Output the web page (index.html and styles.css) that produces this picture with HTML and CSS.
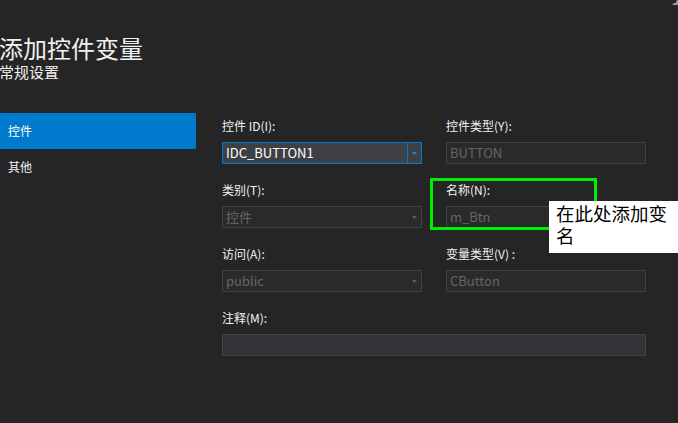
FILE: index.html
```html
<!DOCTYPE html>
<html lang="zh-CN">
<head>
<meta charset="utf-8">
<title>添加控件变量</title>
<link rel="stylesheet" href="styles.css">
</head>
<body>
<div class="dialog">
  <header class="head">
    <h1 class="title">添加控件变量</h1>
    <div class="subtitle">常规设置</div>
  </header>
  <div class="main">
    <nav class="nav">
      <div class="nav-item active">控件</div>
      <div class="nav-item">其他</div>
    </nav>
    <div class="form">
      <div class="field">
        <div class="label">控件 ID(I):</div>
        <div class="combo focus">
          <span class="val">IDC_BUTTON1</span>
          <span class="drop"><svg width="5" height="3" viewBox="0 0 5 3"><path d="M0 0H5L2.5 3Z" fill="#1e8ad6"/></svg></span>
        </div>
      </div>
      <div class="field">
        <div class="label">控件类型(Y):</div>
        <div class="box disabled">BUTTON</div>
      </div>
      <div class="field">
        <div class="label">类别(T):</div>
        <div class="combo disabled">
          <span class="val">控件</span>
          <span class="drop"><svg width="5" height="3" viewBox="0 0 5 3"><path d="M0 0H5L2.5 3Z" fill="#5f5f63"/></svg></span>
        </div>
      </div>
      <div class="field">
        <div class="label">名称(N):</div>
        <div class="box disabled">m_Btn</div>
      </div>
      <div class="field">
        <div class="label">访问(A):</div>
        <div class="combo disabled">
          <span class="val">public</span>
          <span class="drop"><svg width="5" height="3" viewBox="0 0 5 3"><path d="M0 0H5L2.5 3Z" fill="#5f5f63"/></svg></span>
        </div>
      </div>
      <div class="field">
        <div class="label">变量类型(V) :</div>
        <div class="box disabled">CButton</div>
      </div>
      <div class="field wide">
        <div class="label">注释(M):</div>
        <div class="box comment"></div>
      </div>
    </div>
  </div>
  <div class="highlight"></div>
  <div class="note">在此处添加变名</div>
  <svg class="corner" width="6" height="5" viewBox="0 0 6 5"><path d="M6 0V5H0L2 3H4V1Z" fill="#9a9a9a"/></svg>
</div>
</body>
</html>
```

FILE: styles.css
```css
html, body {
  margin: 0;
  padding: 0;
  background: #252526;
}

body {
  width: 678px;
  height: 423px;
  overflow: hidden;
  font-family: "Noto Sans CJK SC", "Noto Sans", sans-serif;
  color: #f1f1f1;
}

.dialog {
  position: relative;
  width: 678px;
  height: 423px;
}

.head {
  padding-top: 34px;
  margin-left: -1px;
}

.title {
  margin: 0;
  font-size: 24px;
  line-height: 28px;
  font-weight: normal;
  color: #f1f1f1;
}

.subtitle {
  margin-top: 1px;
  font-size: 15px;
  line-height: 18px;
  color: #f1f1f1;
}

.main {
  display: flex;
  gap: 26px;
  margin-top: 32px;
}

.nav {
  width: 196px;
  display: flex;
  flex-direction: column;
}

.nav-item {
  height: 36px;
  line-height: 36px;
  padding-left: 8px;
  font-size: 12px;
  color: #f1f1f1;
}

.nav-item.active {
  background: #007acc;
  color: #ffffff;
}

.form {
  padding-top: 5px;
  display: grid;
  grid-template-columns: 200px 200px;
  column-gap: 24px;
  row-gap: 18px;
  align-content: start;
}

.field.wide {
  grid-column: 1 / 3;
}

.label {
  font-size: 12px;
  line-height: 16px;
  margin-bottom: 8px;
  color: #f1f1f1;
}

.box,
.combo {
  box-sizing: border-box;
  height: 22px;
  font-size: 13px;
  line-height: 20px;
  border: 1px solid #434346;
}

.box {
  padding: 0 3px;
}

.box.disabled {
  background: #2a2a2c;
  color: #656565;
  border-color: #3f3f44;
}

.box.comment {
  background: #333337;
  border-color: #434346;
}

.combo {
  display: flex;
}

.combo .val {
  flex: 1;
  padding-left: 3px;
}

.combo .drop {
  width: 13px;
  display: flex;
  align-items: center;
  justify-content: center;
}

.combo.focus {
  border-color: #007acc;
  background: #3f3f46;
  color: #ffffff;
}

.combo.focus .drop {
  border-left: 1px solid #007acc;
}

.combo.disabled {
  background: #2a2a2c;
  color: #656565;
  border-color: #3f3f44;
}

.combo.disabled .drop {
  width: 14px;
}

.highlight {
  position: absolute;
  left: 430px;
  top: 178px;
  width: 161px;
  height: 46px;
  border: 3px solid #00ee00;
}

.note {
  position: absolute;
  left: 549px;
  top: 201px;
  width: 122px;
  height: 49px;
  padding: 3px 0 0 7px;
  background: #ffffff;
  color: #000000;
  font-family: "Liberation Serif", "Noto Sans CJK SC", serif;
  font-size: 18.5px;
  line-height: 22px;
}

.corner {
  position: absolute;
  right: 0;
  top: 0;
}
```
